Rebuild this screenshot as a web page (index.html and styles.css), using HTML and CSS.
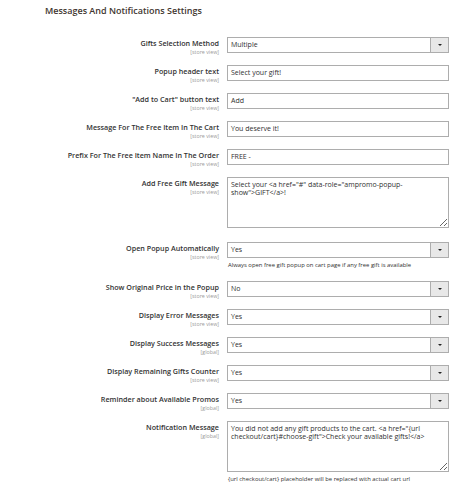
FILE: index.html
```html
<!DOCTYPE html>
<html>
<head>
<meta charset="utf-8">
<link rel="stylesheet" href="styles.css">
</head>
<body>
<div class="page">
  <h2 class="title">Messages And Notifications Settings</h2>
  <div class="form">
    <div class="row">
      <div class="label"><span class="name">Gifts Selection Method</span><span class="scope">[store view]</span></div>
      <div class="field"><div class="select"><span class="value">Multiple</span><span class="btn"><i class="arrow"></i></span></div></div>
    </div>
    <div class="row">
      <div class="label"><span class="name">Popup header text</span><span class="scope">[store view]</span></div>
      <div class="field"><div class="input">Select your gift!</div></div>
    </div>
    <div class="row">
      <div class="label"><span class="name">"Add to Cart" button text</span><span class="scope">[store view]</span></div>
      <div class="field"><div class="input">Add</div></div>
    </div>
    <div class="row">
      <div class="label"><span class="name">Message For The Free Item In The Cart</span><span class="scope">[store view]</span></div>
      <div class="field"><div class="input">You deserve it!</div></div>
    </div>
    <div class="row">
      <div class="label"><span class="name">Prefix For The Free Item Name In The Order</span><span class="scope">[store view]</span></div>
      <div class="field"><div class="input">FREE -</div></div>
    </div>
    <div class="row tall">
      <div class="label"><span class="name">Add Free Gift Message</span><span class="scope">[store view]</span></div>
      <div class="field"><textarea class="area">Select your &lt;a href="#" data-role="ampromo-popup-show"&gt;GIFT&lt;/a&gt;!</textarea></div>
    </div>
    <div class="row">
      <div class="label"><span class="name">Open Popup Automatically</span><span class="scope">[store view]</span></div>
      <div class="field"><div class="select"><span class="value">Yes</span><span class="btn"><i class="arrow"></i></span></div>
        <p class="note">Always open free gift popup on cart page if any free gift is available</p></div>
    </div>
    <div class="row">
      <div class="label"><span class="name">Show Original Price in the Popup</span><span class="scope">[store view]</span></div>
      <div class="field"><div class="select"><span class="value">No</span><span class="btn"><i class="arrow"></i></span></div></div>
    </div>
    <div class="row">
      <div class="label"><span class="name">Display Error Messages</span><span class="scope">[store view]</span></div>
      <div class="field"><div class="select"><span class="value">Yes</span><span class="btn"><i class="arrow"></i></span></div></div>
    </div>
    <div class="row">
      <div class="label"><span class="name">Display Success Messages</span><span class="scope">[global]</span></div>
      <div class="field"><div class="select"><span class="value">Yes</span><span class="btn"><i class="arrow"></i></span></div></div>
    </div>
    <div class="row">
      <div class="label"><span class="name">Display Remaining Gifts Counter</span><span class="scope">[store view]</span></div>
      <div class="field"><div class="select"><span class="value">Yes</span><span class="btn"><i class="arrow"></i></span></div></div>
    </div>
    <div class="row">
      <div class="label"><span class="name">Reminder about Available Promos</span><span class="scope">[global]</span></div>
      <div class="field"><div class="select"><span class="value">Yes</span><span class="btn"><i class="arrow"></i></span></div></div>
    </div>
    <div class="row tall">
      <div class="label"><span class="name">Notification Message</span><span class="scope">[global]</span></div>
      <div class="field"><textarea class="area">You did not add any gift products to the cart. &lt;a href="{url checkout/cart}#choose-gift"&gt;Check your available gifts!&lt;/a&gt;</textarea>
        <p class="note">{url checkout/cart} placeholder will be replaced with actual cart url</p></div>
    </div>
  </div>
</div>
</body>
</html>
```
FILE: styles.css
```css
html, body {
  margin: 0;
  padding: 0;
  background: #fff;
}
body {
  font-family: "Open Sans", "Liberation Sans", sans-serif;
  color: #303030;
}
.page {
  width: 474px;
  padding-top: 5px;
}
.title {
  margin: 0 0 20px 45px;
  font-size: 9px;
  line-height: 12px;
  font-weight: 600;
  color: #41362f;
}
.form {
  display: flex;
  flex-direction: column;
}
.row {
  display: grid;
  grid-template-columns: 219px 222px;
  column-gap: 8px;
  margin-bottom: 12px;
  align-items: start;
}
.row.tall {
  margin-bottom: 14px;
}
.label {
  box-sizing: border-box;
  height: 16px;
  overflow: visible;
  display: flex;
  flex-direction: column;
  align-items: flex-end;
  text-align: right;
  padding-top: 0.5px;
}
.name {
  font-size: 7.2px;
  line-height: normal;
  font-weight: 600;
  color: #333;
  white-space: nowrap;
}
.scope {
  font-size: 5.3px;
  line-height: normal;
  color: #9a9a9a;
  flex: none;
}
.field {
  display: flex;
  flex-direction: column;
}
.input, .select {
  box-sizing: border-box;
  height: 16px;
  border: 1px solid #adadad;
  font-size: 7px;
  line-height: 14px;
  padding: 0 3px;
  color: #303030;
  background: #fff;
}
.select {
  display: flex;
  padding: 0 0 0 3px;
}
.value {
  flex: 1;
}
.btn {
  width: 17px;
  background: #e8e8e8;
  border-left: 1px solid #adadad;
  display: flex;
  align-items: center;
  justify-content: center;
}
.arrow {
  width: 0;
  height: 0;
  border-left: 2px solid transparent;
  border-right: 2px solid transparent;
  border-top: 2.5px solid #222;
}
.area {
  box-sizing: border-box;
  width: 222px;
  height: 51px;
  margin: 0;
  border: 1px solid #adadad;
  border-radius: 0;
  padding: 3px 3px;
  font-family: "Open Sans", "Liberation Sans", sans-serif;
  font-size: 7px;
  line-height: 8px;
  color: #303030;
  resize: vertical;
  outline: none;
  overflow: hidden;
}
.note {
  margin: 3px 0 0 1px;
  font-size: 5.9px;
  line-height: 8px;
  color: #303030;
}
```
